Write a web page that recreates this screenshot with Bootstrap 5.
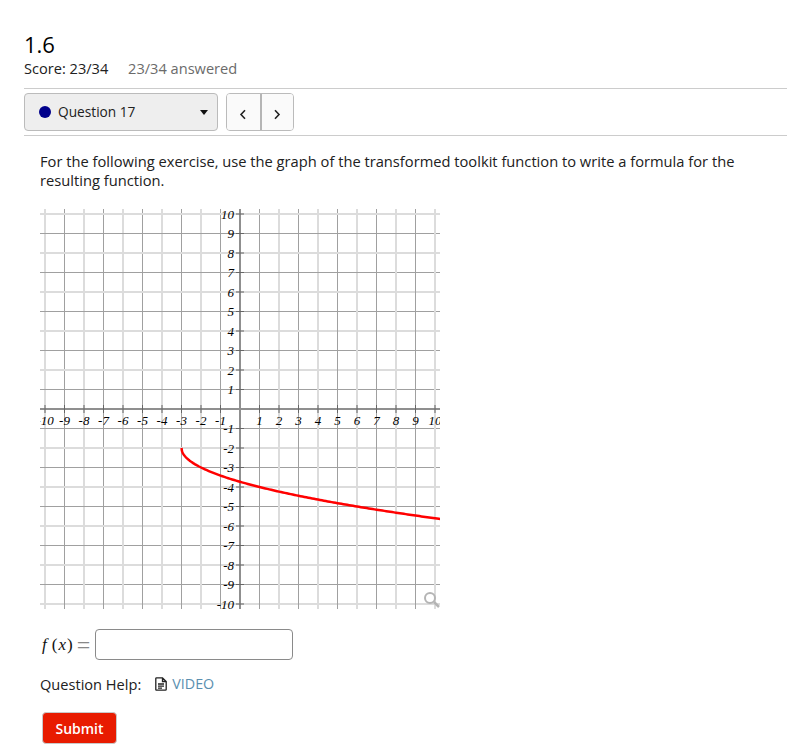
<!DOCTYPE html>
<html lang="en">
<head>
<meta charset="utf-8">
<title>1.6</title>
<link href="https://cdn.jsdelivr.net/npm/bootstrap@5.3.0/dist/css/bootstrap.min.css" rel="stylesheet">
<style>
body { font-family: "Open Sans", sans-serif; font-size: 14.7px; color: #212121; background: #fff; }
.page-wrap { padding: 31px 0 0 24px; }
.asg-title { font-size: 22px; font-weight: 400; line-height: 26px; margin: 0 0 1px; color: #000; }
.asg-score { font-size: 14.6px; line-height: 20px; margin-bottom: 10px; }
.asg-answered { color: #6b6b6b; margin-left: 16px; }
.rule-line { height: 1px; background: #ccc; }
.q-bar { padding: 4px 0; gap: 8px; }
.q-select { width: 194px; height: 38px; background: #eee; border: 1px solid #bbb; border-radius: 4px; padding: 0 9px 0 14px; color: #212121; font-size: 13.7px; }
.q-dot { width: 12px; height: 12px; border-radius: 50%; background: #00008b; margin-right: 7px; }
.q-caret { margin-left: auto; }
.q-nav { height: 38px; border: 1px solid #bbb; border-radius: 4px; background: #fafafa; overflow: hidden; }
.q-nav-btn { width: 33px; height: 100%; background: #fafafa; border: 0; padding: 0 2px 0 0; }
.q-nav-btn + .q-nav-btn { border-left: 2px solid #b5b5b5; }
.q-body { padding: 16px 0 0 16px; }
.q-text { line-height: 19px; font-size: 14.7px; margin: 0 40px 19px 0; }
.graph-box { width: 400px; height: 400px; overflow: hidden; }
.graph-box svg { display: block; }
.glab { font-family: "Liberation Serif", serif; font-style: italic; font-size: 13px; fill: #000; }
.answer-row { margin-top: 20px; height: 31px; }
.math-lab { font-family: "Liberation Serif", serif; font-size: 17px; color: #111; width: 55px; white-space: nowrap; padding-left: 2px; }
.math-lab i { font-style: italic; }
.math-f { margin-right: 5px; }
.math-x { margin: 0 1px; }
.math-eq { color: #888; font-size: 24px; line-height: 1; margin-left: 4px; }
.answer-field { width: 198px; height: 31px; border: 1px solid #8a8a8a; border-radius: 4px; background: #fff; padding: 0 6px; }
.help-row { margin-top: 14px; line-height: 20px; font-size: 14.6px; }
.help-lab { margin-right: 14px; }
.help-link { color: #5a8fb0; text-decoration: none; margin-left: 5px; font-size: 14.3px; }
.submit-btn { margin: 18px 0 0 2px; width: 75px; height: 32px; padding: 0; font-size: 14px; font-weight: 600; color: #fff; background: #e81b00; border: 1px solid #c9c9c9; border-radius: 4px; }
</style>
</head>
<body>
<div class="page-wrap">
  <h1 class="asg-title">1.6</h1>
  <div class="asg-score">Score: 23/34 <span class="asg-answered">23/34 answered</span></div>
  <div class="rule-line"></div>
  <div class="d-flex align-items-center q-bar">
    <div class="q-select d-flex align-items-center">
      <span class="q-dot"></span><span>Question 17</span>
      <svg class="q-caret" width="8" height="5" viewBox="0 0 8 5"><path d="M0 0H8L4 5Z" fill="#111"/></svg>
    </div>
    <div class="q-nav d-flex">
      <button class="q-nav-btn" type="button" aria-label="Previous"><svg width="8" height="11" viewBox="0 0 8 11"><path d="M6 1.2L2 5.5L6 9.8" fill="none" stroke="#222" stroke-width="1.6"/></svg></button>
      <button class="q-nav-btn" type="button" aria-label="Next"><svg width="8" height="11" viewBox="0 0 8 11"><path d="M2 1.2L6 5.5L2 9.8" fill="none" stroke="#222" stroke-width="1.6"/></svg></button>
    </div>
  </div>
  <div class="rule-line"></div>
  <div class="q-body">
    <p class="q-text">For the following exercise, use the graph of the transformed toolkit function to write a formula for the resulting function.</p>
    <div class="graph-box" id="graph"></div>
    <div class="answer-row d-flex align-items-center">
      <span class="math-lab d-flex align-items-center"><i class="math-f">f</i><span>(</span><i class="math-x">x</i><span>)</span><span class="math-eq">=</span></span>
      <input class="answer-field" type="text" aria-label="Answer">
    </div>
    <div class="help-row d-flex align-items-center">
      <span class="help-lab">Question Help:</span>
      <svg width="12" height="14" viewBox="0 0 12 14"><path d="M0.8 1.6Q0.8 0.8 1.6 0.8H7.5L11.2 4.5V12.4Q11.2 13.2 10.4 13.2H1.6Q0.8 13.2 0.8 12.4Z M7.5 0.8V4.5H11.2 M3 7H9 M3 9.2H9 M3 11.2H7" fill="none" stroke="#222" stroke-width="1.3"/></svg>
      <a class="help-link" href="#">VIDEO</a>
    </div>
    <button class="submit-btn" type="button">Submit</button>
  </div>
</div>
<script>
(function () {
  var s = '<svg width="400" height="400" viewBox="0 0 400 400" xmlns="http://www.w3.org/2000/svg">';
  var ox = 200, oy = 200, u = 19.5, i;
  function X(v) { return ox + v * u; }
  function Y(v) { return oy - v * u; }
  for (i = -10; i <= 10; i++) {
    if (i === 0) continue;
    var even = i % 2 === 0;
    var col = even ? '#dcdcdc' : '#a0a0a0';
    var w = even ? 2 : 1;
    s += '<line x1="' + X(i) + '" y1="0" x2="' + X(i) + '" y2="400" stroke="' + col + '" stroke-width="' + w + '"/>';
    s += '<line x1="0" y1="' + Y(i) + '" x2="400" y2="' + Y(i) + '" stroke="' + col + '" stroke-width="' + w + '"/>';
  }
  s += '<line x1="' + ox + '" y1="0" x2="' + ox + '" y2="400" stroke="#8f8f8f" stroke-width="2"/>';
  s += '<line x1="0" y1="' + Y(0) + '" x2="400" y2="' + Y(0) + '" stroke="#8f8f8f" stroke-width="2"/>';
  for (i = -10; i <= 10; i++) {
    if (i === 0) continue;
    s += '<line x1="' + X(i) + '" y1="' + (Y(0) - 4) + '" x2="' + X(i) + '" y2="' + (Y(0) + 4) + '" stroke="#666"/>';
    s += '<line x1="' + (ox - 4) + '" y1="' + Y(i) + '" x2="' + (ox + 4) + '" y2="' + Y(i) + '" stroke="#666"/>';
    s += '<text class="glab" x="' + X(i) + '" y="' + (Y(0) + 16) + '" text-anchor="middle">' + i + '</text>';
    s += '<text class="glab" x="' + (ox - 6) + '" y="' + (Y(i) + 4.5) + '" text-anchor="end">' + i + '</text>';
  }
  var d = '', v;
  for (v = -3; v <= 10.3; v += (v < -2.5 ? 0.02 : 0.1)) {
    d += (d ? 'L' : 'M') + X(v).toFixed(2) + ' ' + Y(-Math.sqrt(Math.max(v + 3, 0)) - 2).toFixed(2);
  }
  s += '<path d="' + d + '" fill="none" stroke="#f00" stroke-width="2.5"/>';
  s += '<circle cx="390" cy="389" r="5" fill="none" stroke="#b4b4b4" stroke-width="2"/><line x1="394" y1="393" x2="399" y2="398" stroke="#b4b4b4" stroke-width="2.5"/>';
  s += '</svg>';
  document.getElementById('graph').innerHTML = s;
})();
</script>
<script src="https://cdn.jsdelivr.net/npm/bootstrap@5.3.0/dist/js/bootstrap.bundle.min.js"></script>
</body>
</html>
